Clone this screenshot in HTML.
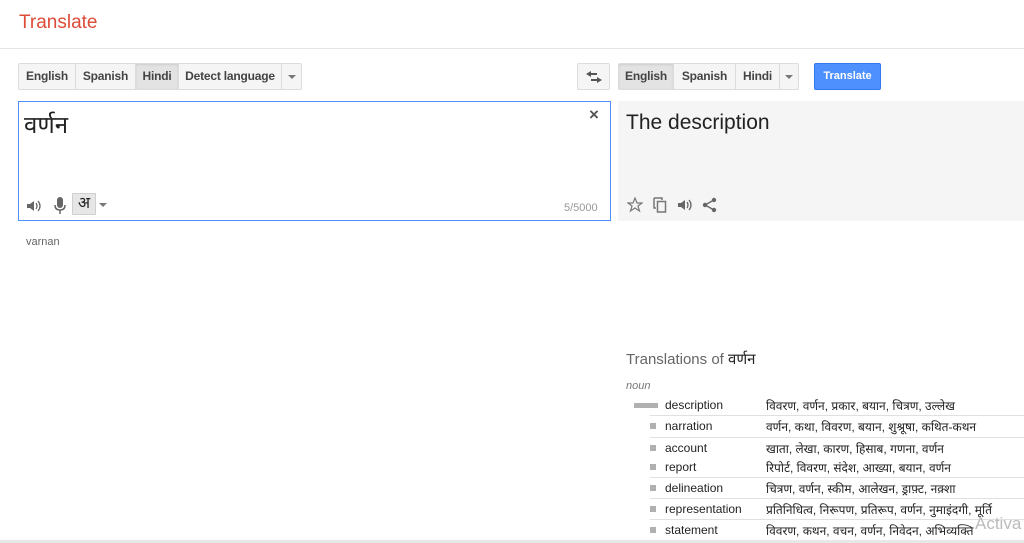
<!DOCTYPE html>
<html><head><meta charset="utf-8">
<style>
*{margin:0;padding:0;box-sizing:border-box}
body{width:1024px;height:543px;overflow:hidden;background:#fff;font-family:"Liberation Sans",Arial,sans-serif;position:relative;color:#222}
.a{position:absolute}
.hdr{left:0;top:0;width:1024px;height:49px;border-bottom:1px solid #e5e5e5}
.title{left:19px;top:12px;font-size:19px;color:#dd4b39}
.bar{height:27px;border:1px solid #dcdcdc;border-radius:2px;background:#f5f5f5;display:flex;font-size:12px;font-weight:bold;color:#444;white-space:nowrap;letter-spacing:-0.2px}
.bar div{text-align:center;line-height:25px;border-right:1px solid #dcdcdc;flex:none}
.bar div:last-child{border-right:none}
.bar .sel{background:#e3e3e3;box-shadow:inset 0 1px 2px rgba(0,0,0,.1)}
.caret{width:0;height:0;border-left:4px solid transparent;border-right:4px solid transparent;border-top:4px solid #777;display:inline-block;vertical-align:middle}
.src{left:18px;top:101px;width:593px;height:120px;border:1px solid #4d90fe;background:#fff}
.out{left:618px;top:101px;width:406px;height:120px;background:#f5f5f5}
.row{left:634px;font-size:12px;color:#222}
.hi{left:766px;font-size:12px;color:#222}
.line{left:650px;width:374px;height:1px;background:#e0e0e0}
.sq{left:650px;width:6px;height:6px;background:#b0b0b0}
</style></head><body>
<div class="a hdr"></div>
<div class="a title">Translate</div>

<div class="a bar" style="left:18px;top:63px;width:284px">
<div style="width:57px">English</div><div style="width:60px">Spanish</div><div class="sel" style="width:43px">Hindi</div><div style="width:103px">Detect language</div><div style="width:19px"><span class="caret"></span></div>
</div>
<div class="a bar" style="left:577px;top:63px;width:33px;justify-content:center;align-items:center">
<svg width="16" height="12" viewBox="0 0 16 12"><path d="M5 0L0 3l5 3V4h6V2H5z M11 6l5 3-5 3v-2H5V8h6z" fill="#555"/></svg>
</div>
<div class="a bar" style="left:618px;top:63px;width:181px">
<div class="sel" style="width:55px">English</div><div style="width:62px">Spanish</div><div style="width:44px">Hindi</div><div style="width:18px"><span class="caret"></span></div>
</div>
<div class="a" style="left:814px;top:63px;width:67px;height:27px;background:#4d90fe;border:1px solid #3079ed;border-radius:2px;color:#fff;font-size:11px;font-weight:bold;text-align:center;line-height:25px">Translate</div>

<div class="a src"></div>
<div class="a" style="left:24px;top:108px;font-size:24px;font-family:'Liberation Sans','Noto Sans CJK JP',sans-serif">वर्णन</div>
<div class="a" style="left:589px;top:105px;font-size:17px;font-weight:bold;color:#555">×</div>
<svg class="a" style="left:26px;top:199px" width="16" height="14" viewBox="0 0 16 14"><path d="M1 5h3l4-3v10L4 9H1z" fill="#666"/><path d="M10 4q2 3 0 6M12 2q4 5 0 10" stroke="#666" stroke-width="1.3" fill="none"/></svg>
<svg class="a" style="left:54px;top:197px" width="12" height="18" viewBox="0 0 12 18"><rect x="3" y="0" width="6" height="11" rx="3" fill="#666"/><path d="M1 8q0 5 5 5q5 0 5-5M6 13v4" stroke="#666" stroke-width="1.5" fill="none"/></svg>
<div class="a" style="left:72px;top:193px;width:24px;height:22px;background:#e6e6e6;border:1px solid #d0d0d0;font-size:16px;text-align:center;line-height:20px">अ</div>
<span class="a caret" style="left:99px;top:203px"></span>
<div class="a" style="left:564px;top:202px;font-size:11px;color:#999">5/5000</div>
<div class="a" style="left:26px;top:236px;font-size:11px;color:#666">varnan</div>

<div class="a out"></div>
<div class="a" style="left:626px;top:111px;font-size:21px;color:#222">The description</div>
<svg class="a" style="left:627px;top:197px" width="16" height="16" viewBox="0 0 16 16"><path d="M8 1l2 5h5l-4 3 1.5 5L8 11l-4.5 3L5 9 1 6h5z" fill="none" stroke="#777" stroke-width="1.2"/></svg>
<svg class="a" style="left:653px;top:197px" width="14" height="16" viewBox="0 0 14 16"><path d="M1 1h8v2M1 1v10h2" stroke="#777" stroke-width="1.5" fill="none"/><rect x="4.5" y="4.5" width="8" height="10.5" fill="none" stroke="#777" stroke-width="1.5"/></svg>
<svg class="a" style="left:677px;top:198px" width="16" height="14" viewBox="0 0 16 14"><path d="M1 5h3l4-3v10L4 9H1z" fill="#666"/><path d="M10 4q2 3 0 6M12 2q4 5 0 10" stroke="#666" stroke-width="1.3" fill="none"/></svg>
<svg class="a" style="left:702px;top:197px" width="16" height="16" viewBox="0 0 16 16"><circle cx="12" cy="3" r="2.2" fill="#666"/><circle cx="3" cy="8" r="2.2" fill="#666"/><circle cx="12" cy="13" r="2.2" fill="#666"/><path d="M12 3L3 8l9 5" stroke="#666" stroke-width="1.4" fill="none"/></svg>

<div class="a" style="left:626px;top:349px;font-size:15px;color:#666">Translations of <span style="color:#222">वर्णन</span></div>
<div class="a" style="left:626px;top:380px;font-size:11px;font-style:italic;color:#777">noun</div>

<div class="a" style="left:634px;top:403px;width:24px;height:5px;background:#b0b0b0"></div>
<div class="a row" style="left:665px;top:398px">description</div><div class="a hi" style="top:397px">विवरण, वर्णन, प्रकार, बयान, चित्रण, उल्लेख</div>
<div class="a line" style="top:415px"></div>
<div class="a sq" style="top:423px"></div><div class="a row" style="left:665px;top:419px">narration</div><div class="a hi" style="top:418px">वर्णन, कथा, विवरण, बयान, शुश्रूषा, कथित-कथन</div>
<div class="a line" style="top:437px"></div>
<div class="a sq" style="top:445px"></div><div class="a row" style="left:665px;top:441px">account</div><div class="a hi" style="top:440px">खाता, लेखा, कारण, हिसाब, गणना, वर्णन</div>
<div class="a sq" style="top:464px"></div><div class="a row" style="left:665px;top:460px">report</div><div class="a hi" style="top:459px">रिपोर्ट, विवरण, संदेश, आख्या, बयान, वर्णन</div>
<div class="a line" style="top:477px"></div>
<div class="a sq" style="top:485px"></div><div class="a row" style="left:665px;top:481px">delineation</div><div class="a hi" style="top:480px">चित्रण, वर्णन, स्कीम, आलेखन, ड्राफ़्ट, नक़्शा</div>
<div class="a line" style="top:498px"></div>
<div class="a sq" style="top:506px"></div><div class="a row" style="left:665px;top:502px">representation</div><div class="a hi" style="top:501px">प्रतिनिधित्व, निरूपण, प्रतिरूप, वर्णन, नुमाइंदगी, मूर्ति</div>
<div class="a line" style="top:519px"></div>
<div class="a sq" style="top:527px"></div><div class="a row" style="left:665px;top:523px">statement</div><div class="a hi" style="top:522px">विवरण, कथन, वचन, वर्णन, निवेदन, अभिव्यक्ति</div>
<div class="a" style="left:975px;top:514px;font-size:17px;color:#bbb">Activa</div>
<div class="a" style="left:0;top:540px;width:1024px;height:3px;background:#e8e8e8"></div>
</body></html>
